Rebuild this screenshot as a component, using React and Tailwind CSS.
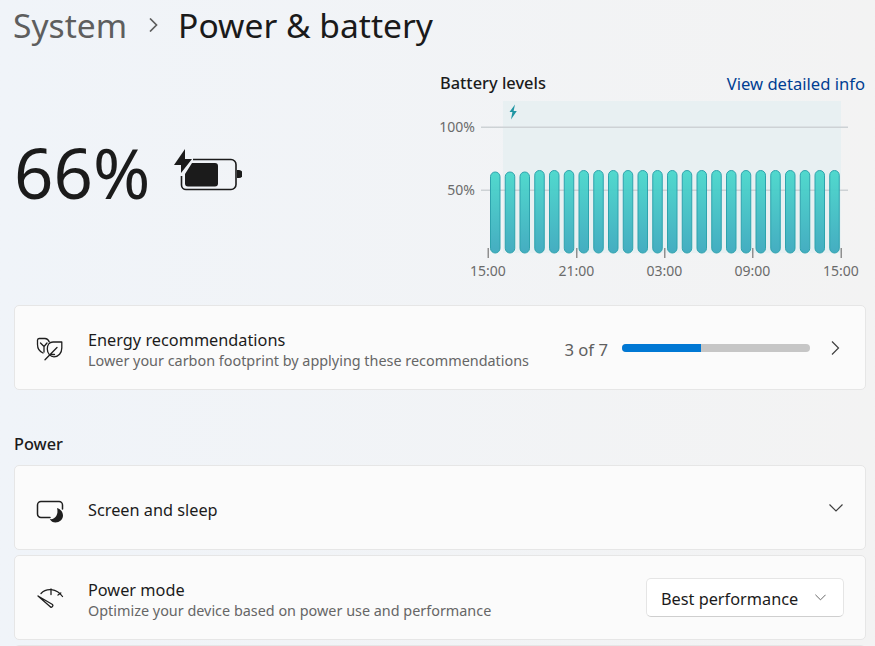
const hours = ["15:00", "21:00", "03:00", "09:00", "15:00"];
const tickX = [488, 576.5, 664.5, 752.5, 841];
const bars = Array.from({ length: 24 }, (_, i) => ({
  x: 490 + i * 14.75,
  top: i < 3 ? 172 : 170.5,
}));

function BatteryChart() {
  return (
    <svg width="450" height="190" viewBox="425 95 450 190" className="block">
      <defs>
        <linearGradient id="barFill" x1="0" y1="0" x2="0" y2="1">
          <stop offset="0" stopColor="#4bd8cc" />
          <stop offset="1" stopColor="#3eaabf" />
        </linearGradient>
      </defs>
      <rect x="503" y="101" width="338" height="152" fill="#e8f0f2" />
      <path d="M515 104.500 L509.500 112 H512.400 L511 119.500 L516.800 111 H513.600 Z" fill="#1f95a3" />
      <rect x="481" y="126.500" width="367" height="1.500" fill="#cdd2d5" />
      <rect x="481" y="189.500" width="367" height="1.500" fill="#cdd2d5" />
      {bars.map((b) => (
        <rect
          key={b.x}
          x={b.x + 0.5}
          y={b.top}
          width="9.500"
          height={253 - b.top}
          rx="4.700"
          fill="url(#barFill)"
          fillOpacity="0.96"
          stroke="#2ea3ad"
          strokeWidth="1"
        />
      ))}
      {tickX.map((x, i) => (
        <rect key={i} x={x - 0.5} y="248" width="1.500" height="10" fill="#8f8f8f" />
      ))}
      <text x="475" y="132" textAnchor="end" fontSize="14" fill="#6b6b6b">100%</text>
      <text x="475" y="195" textAnchor="end" fontSize="14" fill="#6b6b6b">50%</text>
      {hours.map((h, i) => (
        <text key={i} x={tickX[i]} y="276" textAnchor="middle" fontSize="14" fill="#6b6b6b">{h}</text>
      ))}
    </svg>
  );
}

function BatteryIcon() {
  return (
    <svg width="68" height="42" viewBox="174 149 68 42" fill="none">
      <path d="M185 149 L174 165 H181 V173 L192 159 H185 Z" fill="#1b1b1b" />
      <path d="M193 159.500 H231 A5 5 0 0 1 236 164.500 V184.500 A5 5 0 0 1 231 189.500 H186 A4.500 4.500 0 0 1 181.500 185 V176" stroke="#1b1b1b" strokeWidth="1.600" />
      <path d="M192 163 H215 A3 3 0 0 1 218 166 V183.500 A3 3 0 0 1 215 186.500 H188 A3 3 0 0 1 185 183.500 V174 Z" fill="#1b1b1b" />
      <path d="M237 170 H239 A3.500 4 0 0 1 239 178 H237 Z" fill="#1b1b1b" />
    </svg>
  );
}

function LeafIcon() {
  return (
    <svg width="28" height="28" viewBox="36 333 28 28" fill="none" stroke="#1f1f1f" strokeWidth="1.300" strokeLinecap="round" strokeLinejoin="round">
      <path d="M43 352 C39.500 350.500 37.500 347.500 37.500 343.500 V339 A1.800 1.800 0 0 1 39.300 337.500 H45 C46.800 337.500 48.500 339 49.300 341" />
      <path d="M61.800 341 H53 C49.500 341 47.300 344 47.300 348 C47.300 352.500 50.500 355.800 54 355.800 C58.500 355.800 61.800 352 61.800 347 Z" />
      <path d="M45 358.800 L57 346.500 M50 353.500 H54.500" />
      <path d="M40.500 342 L44 345.500 L47 342 M44 345.500 V351" />
    </svg>
  );
}

function SleepIcon() {
  return (
    <svg width="28" height="30" viewBox="36 492 28 30" fill="none">
      <path d="M50 516.500 H41 A3.500 3.500 0 0 1 37.500 513 V504 A3.500 3.500 0 0 1 41 500.500 H59 A3.500 3.500 0 0 1 62.500 504 V508" stroke="#1f1f1f" strokeWidth="1.500" strokeLinecap="round" />
      <path d="M57 507 C60.500 508 63 511 63 514.500 C63 518.500 59.500 521.500 55.500 521.500 C53 521.500 51 520.500 49.800 518 C54.500 519 59 514 57 507 Z" fill="#1f1f1f" />
    </svg>
  );
}

function GaugeIcon() {
  return (
    <svg width="28" height="28" viewBox="36 583 28 28" fill="none" stroke="#1f1f1f" strokeWidth="1.300" strokeLinecap="round" strokeLinejoin="round">
      <path d="M41 592.500 C46 586.800 56.500 586.800 62.500 595.500" />
      <path d="M38 595 L52.500 603.500 A1.600 1.600 0 0 1 50 605.500 Z" />
      <path d="M51 588 V593.500 M58 594 L60.800 592" />
    </svg>
  );
}

function Chevron({ down, className, color = "#3f3f3f", weight = "1.200" }) {
  return (
    <svg width="14" height="14" viewBox="0 0 14 14" fill="none" stroke={color} strokeWidth={weight} className={className}>
      <path d={down ? "M0.500 3.500 L7 10 L13.500 3.500" : "M3 0.500 L9.500 7 L3 13.500"} />
    </svg>
  );
}

function Card({ icon, title, subtitle, children }) {
  return (
    <div className="flex h-[85px] shrink-0 items-center rounded-[5px] border border-[#e6e6e6] bg-[#fbfbfb] pl-[21px] pr-[22px]">
      <div className="flex w-[52px] shrink-0 items-center">{icon}</div>
      <div className={subtitle ? "flex-1 pt-[7px]" : "flex-1 pt-[5px]"}>
        <div className="text-[16.3px] leading-[20px] text-[#1b1b1b]">{title}</div>
        {subtitle && <div className="text-[14.4px] leading-[22px] text-[#666666]">{subtitle}</div>}
      </div>
      {children}
    </div>
  );
}

export default function App() {
  return (
    <div className="h-[646px] w-[875px] overflow-hidden bg-gradient-to-r from-[#f0f4f9] to-[#f3f3f3] font-['Noto_Sans',sans-serif]">
      {/* Breadcrumb */}
      <div className="flex h-[50px] items-center pl-[13px]">
        <span className="text-[33.600px] leading-[40px] text-[#5e5e5e]">System</span>
        <Chevron className="ml-[20px] mr-[17px]" color="#5e5e5e" weight="1.700" />
        <span className="text-[33.600px] leading-[40px] text-[#1a1a1a]">Power &amp; battery</span>
      </div>

      {/* Battery summary */}
      <div className="flex h-[255px]">
        <div className="flex w-[425px] items-start pl-[14px] pt-[80px]">
          <span className="text-[69px] leading-[84px] text-[#1b1b1b]">66%</span>
          <div className="ml-[24px] mt-[19px]"><BatteryIcon /></div>
        </div>
        <div className="flex-1">
          <div className="flex h-[45px] items-end justify-between pl-[15px] pr-[10px]">
            <span className="text-[16.400px] font-medium leading-[25px] text-[#1b1b1b]">Battery levels</span>
            <span className="text-[16.600px] leading-[22px] text-[#003e92]">View detailed info</span>
          </div>
          <BatteryChart />
        </div>
      </div>

      <div className="flex flex-col pl-[14px] pr-[9px]">
        <Card
          icon={<LeafIcon />}
          title="Energy recommendations"
          subtitle="Lower your carbon footprint by applying these recommendations"
        >
          <span className="pt-[5px] text-[16.700px] text-[#5f5f5f]">3 of 7</span>
          <div className="ml-[14px] mr-[19px] h-[8px] w-[188px] overflow-hidden rounded-full bg-[#c6c6c6]">
            <div className="h-full w-[79px] bg-[#0078d4]" />
          </div>
          <Chevron />
        </Card>

        <div className="mt-[42px] h-[33px] text-[16.300px] font-medium leading-[24px] text-[#1b1b1b]">Power</div>

        <div className="flex flex-col gap-[5px]">
          <Card icon={<SleepIcon />} title="Screen and sleep">
            <Chevron down />
          </Card>
          <Card
            icon={<GaugeIcon />}
            title="Power mode"
            subtitle="Optimize your device based on power use and performance"
          >
            <div className="-mr-[1px] flex h-[39px] w-[198px] items-center justify-between rounded-[5px] border border-[#e5e5e5] border-b-[#cfcfcf] bg-white pl-[14px] pr-[17px] pt-[3px] text-[16.300px] text-[#1b1b1b]">
              Best performance
              <Chevron down className="-mt-[3px] h-[11px] w-[11px]" color="#5f5f5f" />
            </div>
          </Card>
          <Card title="" />
        </div>
      </div>
    </div>
  );
}
